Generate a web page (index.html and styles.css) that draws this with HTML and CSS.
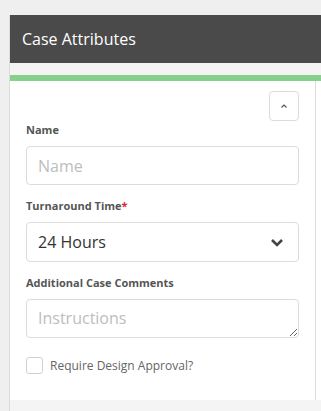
FILE: index.html
```html
<!DOCTYPE html>
<html lang="en">
<head>
  <meta charset="UTF-8" />
  <meta name="viewport" content="width=device-width, initial-scale=1.0"/>
  <title>Case Attributes</title>
  <link rel="stylesheet" href="styles.css">
</head>
<body>
  <div class="panel">
    <div class="panel-header">Case Attributes</div>
    <div class="panel-band"></div>
    <div class="card">
      <div class="card-body">
        <div class="card-tools">
          <button class="collapse-btn" type="button" aria-label="Collapse">
            <svg width="8" height="6" viewBox="0 0 8 6"><polyline points="1.5,4.5 4,2 6.5,4.5" fill="none" stroke="#555" stroke-width="1.2"/></svg>
          </button>
        </div>

        <div class="form-group">
          <label class="field-label" for="caseName">Name</label>
          <input class="field" id="caseName" type="text" placeholder="Name">
        </div>

        <div class="form-group">
          <label class="field-label" for="turnaround">Turnaround Time<span class="req">*</span></label>
          <div class="select-wrap">
            <select class="field select" id="turnaround">
              <option>24 Hours</option>
              <option>48 Hours</option>
              <option>72 Hours</option>
            </select>
            <svg class="chevron" width="14" height="9" viewBox="0 0 14 9"><polyline points="2,2 7,7 12,2" fill="none" stroke="#444" stroke-width="2.6"/></svg>
          </div>
        </div>

        <div class="form-group">
          <label class="field-label" for="comments">Additional Case Comments</label>
          <textarea class="field textarea" id="comments" placeholder="Instructions"></textarea>
        </div>

        <label class="check">
          <input type="checkbox">
          <span class="check-box"></span>
          <span class="check-text">Require Design Approval?</span>
        </label>
      </div>
    </div>
    <div class="panel-foot"></div>
  </div>
</body>
</html>
```

FILE: styles.css
```css
body {
  margin: 0;
  background: #efefef;
  font-family: 'Open Sans', 'Liberation Sans', sans-serif;
  color: #333;
}
.panel {
  margin-top: 15px;
  margin-left: 9px;
  border-left: 1px solid #dcdcdc;
  background: #f4f4f4;
  min-height: 396px;
}
.panel-header {
  height: 48px;
  background: #4a4a4a;
  color: #fff;
  font-size: 16px;
  line-height: 48px;
  padding-left: 12px;
}
.panel-band {
  height: 12px;
  background: #f4f4f4;
}
.card {
  background: #fff;
  border-top: 6px solid #85d08a;
}
.card-body {
  width: 273px;
  padding: 0 16px 26px 16px;
  border-right: 1px solid #dcdcdc;
  background: #fff;
}
.card-tools {
  display: flex;
  justify-content: flex-end;
  padding-top: 10px;
}
.collapse-btn {
  width: 30px;
  height: 30px;
  border: 1px solid #dcdcdc;
  border-radius: 4px;
  background: #fff;
  padding: 0;
  display: flex;
  align-items: center;
  justify-content: center;
}
.form-group {
  margin-bottom: 13px;
}
.card-tools + .form-group {
  margin-top: 1px;
}
.field-label {
  display: block;
  font-size: 11px;
  font-weight: 700;
  line-height: 16px;
  color: #555;
  margin-bottom: 8px;
}
.req {
  color: #d9262e;
}
.field {
  display: block;
  box-sizing: border-box;
  width: 100%;
  height: 39px;
  border: 1px solid #dcdcdc;
  border-radius: 4px;
  padding: 0 11px;
  font-family: inherit;
  font-size: 16px;
  color: #333;
  background: #fff;
  outline: none;
}
.field::placeholder {
  color: #bdbdbd;
}
.select-wrap {
  position: relative;
}
.select {
  height: 40px;
  appearance: none;
  -webkit-appearance: none;
}
.chevron {
  position: absolute;
  right: 15px;
  top: 16px;
  pointer-events: none;
}
.textarea {
  resize: vertical;
  padding-top: 7px;
  line-height: 22px;
}
.check {
  display: flex;
  align-items: center;
  gap: 7px;
  margin-top: 19px;
  cursor: pointer;
}
.check input {
  display: none;
}
.check-box {
  box-sizing: border-box;
  width: 17px;
  height: 17px;
  border: 1px solid #d0d0d0;
  border-radius: 3px;
  background: #fff;
}
.check-text {
  font-size: 12px;
  color: #666;
}
.panel-foot {
  height: 11px;
}
```
